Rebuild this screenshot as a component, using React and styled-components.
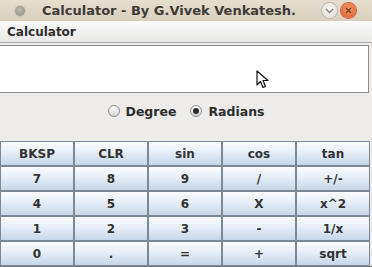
import React from "react";
import styled, { createGlobalStyle } from "styled-components";

const Global = createGlobalStyle`
  html, body { margin: 0; padding: 0; background: #edeceb; }
  body { font-family: "DejaVu Sans", sans-serif; }
`;

const Window = styled.div`
  width: 372px;
  height: 267px;
  overflow: hidden;
  position: relative;
  background: #edeceb;
  display: flex;
  flex-direction: column;
`;

const TitleBar = styled.div`
  height: 21px;
  flex: none;
  background: linear-gradient(#e6decf, #d9cfbd);
  display: flex;
  align-items: center;
  padding: 0 16px 0 15px;
  box-sizing: border-box;
`;

const Dot = styled.div`
  width: 10px;
  height: 10px;
  border-radius: 50%;
  background: radial-gradient(circle at 45% 40%, #bdb8b0, #8f8a83);
  box-shadow: 0 0 0 1px #cfc7b8;
  flex: none;
`;

const Title = styled.div`
  margin-left: 17px;
  font: bold 13px "DejaVu Sans", sans-serif;
  color: #3c3b37;
  white-space: nowrap;
  flex: 1;
`;

const WinBtn = styled.div`
  width: 15px;
  height: 15px;
  border-radius: 50%;
  margin-left: 4px;
  display: flex;
  align-items: center;
  justify-content: center;
  background: ${(p) =>
    p.close
      ? "radial-gradient(circle at 50% 40%, #f59a6a, #e0552a)"
      : "radial-gradient(circle at 50% 40%, #fbfaf8, #dcd8d0)"};
  box-shadow: 0 0 0 1px ${(p) => (p.close ? "#c9653d" : "#bdb6a8")};
`;

const MenuBar = styled.div`
  height: 21px;
  flex: none;
  background: linear-gradient(#fbfbfb, #e9e8e7);
  border-bottom: 1px solid #a9a9a9;
  display: flex;
  align-items: center;
  padding-left: 7px;
  font: bold 12px "DejaVu Sans", sans-serif;
  color: #2e2e2e;
`;

const Display = styled.div`
  margin-top: 2px;
  height: 48px;
  width: 369px;
  box-sizing: border-box;
  background: #fff;
  border: 1px solid #8d8d8d;
  border-left: none;
  flex: none;
  position: relative;
`;

const Cursor = styled.svg`
  position: absolute;
  left: 256px;
  top: 24px;
`;

const RadioRow = styled.div`
  height: 36px;
  margin-bottom: 12px;
  flex: none;
  display: flex;
  align-items: center;
  justify-content: center;
  gap: 14px;
  padding-left: 0px;
`;

const RadioLabel = styled.label`
  display: flex;
  align-items: center;
  gap: 6px;
  font: bold 12.5px "DejaVu Sans", sans-serif;
  color: #2e2e2e;
`;

const RadioCircle = styled.span`
  width: 12px;
  height: 12px;
  border-radius: 50%;
  box-sizing: border-box;
  border: 1px solid #8c8c8c;
  background: linear-gradient(#ffffff, #d6d6d6);
  display: flex;
  align-items: center;
  justify-content: center;
  &::after {
    content: "";
    width: 6px;
    height: 6px;
    border-radius: 50%;
    background: ${(p) => (p.checked ? "#2b2b2b" : "transparent")};
  }
`;

const Grid = styled.div`
  width: 370px;
  display: grid;
  grid-template-columns: repeat(5, 74px);
  grid-auto-rows: 25px;
  flex: none;
`;

const Key = styled.div`
  box-sizing: border-box;
  border: 1px solid #7b8897;
  background: linear-gradient(#fbfcfe 0%, #e6eef7 45%, #c6d6e9 100%);
  display: flex;
  align-items: center;
  justify-content: center;
  font: bold 12px "DejaVu Sans", sans-serif;
  color: #333;
`;

const Footer = styled.div`
  height: 2px;
  flex: none;
  background: #7a7a7a;
`;

const keys = [
  "BKSP", "CLR", "sin", "cos", "tan",
  "7", "8", "9", "/", "+/-",
  "4", "5", "6", "X", "x^2",
  "1", "2", "3", "-", "1/x",
  "0", ".", "=", "+", "sqrt",
];

export default function App() {
  return (
    <>
      <Global />
      <Window>
        <TitleBar>
          <Dot />
          <Title>Calculator - By G.Vivek Venkatesh.</Title>
          <WinBtn>
            <svg width="9" height="6" viewBox="0 0 9 6">
              <path d="M1 1 L4.5 4.5 L8 1" fill="none" stroke="#8a8478" strokeWidth="1.4" />
            </svg>
          </WinBtn>
          <WinBtn close>
            <svg width="7" height="7" viewBox="0 0 7 7">
              <path d="M1 1 L6 6 M6 1 L1 6" stroke="#7a3a22" strokeWidth="1.3" />
            </svg>
          </WinBtn>
        </TitleBar>
        <MenuBar>Calculator</MenuBar>
        <Display>
          <Cursor width="13" height="20" viewBox="0 0 13 20">
            <path d="M1 1 L1 15 L4.5 11.5 L7 17.5 L9.5 16.5 L7 10.5 L12 10.5 Z" fill="#fff" stroke="#111" strokeWidth="1.2" strokeLinejoin="round" />
          </Cursor>
        </Display>
        <RadioRow>
          <RadioLabel>
            <RadioCircle />
            Degree
          </RadioLabel>
          <RadioLabel>
            <RadioCircle checked />
            Radians
          </RadioLabel>
        </RadioRow>
        <Grid>
          {keys.map((k) => (
            <Key key={k}>{k}</Key>
          ))}
        </Grid>
        <Footer />
      </Window>
    </>
  );
}
